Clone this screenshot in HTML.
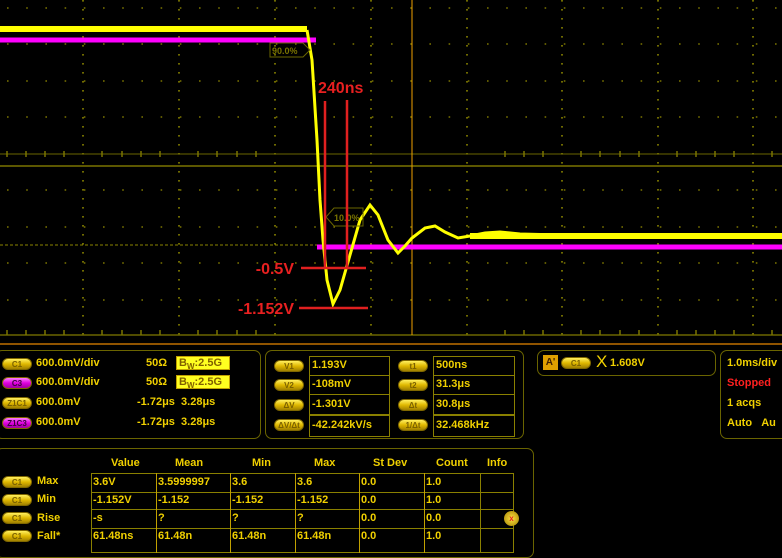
<!DOCTYPE html>
<html><head><meta charset="utf-8"><style>
*{margin:0;padding:0;box-sizing:border-box}
body{width:782px;height:546px;background:#000;position:relative;overflow:hidden;font-family:"Liberation Sans",sans-serif;font-weight:bold;color:#f0d000;font-size:11px}
.a{position:absolute;white-space:nowrap}
.pn{position:absolute;border:1.5px solid #6a6400;border-radius:7px}
.b{position:absolute;width:30px;height:12px;border-radius:6px;background:linear-gradient(#fff060,#e0b800 50%,#a08000);color:#7a6000;font-size:8px;text-align:center;line-height:12px;border:1px solid #806800}
.m{background:linear-gradient(#ff80ff,#e000e0 50%,#a000a0);color:#400040}
.c{position:absolute;border:1px solid #8a8000}
.t{position:absolute;font-size:11px}
</style></head><body>
<svg class="a" style="left:0;top:0" width="782" height="346">
<g stroke="#8a8400" stroke-width="1.6" stroke-dasharray="1.6 7.4" fill="none">
<line x1="83" y1="0" x2="83" y2="335"/><line x1="179" y1="0" x2="179" y2="335"/><line x1="275" y1="0" x2="275" y2="335"/><line x1="371" y1="0" x2="371" y2="335"/><line x1="467" y1="0" x2="467" y2="335"/><line x1="562" y1="0" x2="562" y2="335"/><line x1="658" y1="0" x2="658" y2="335"/><line x1="753" y1="0" x2="753" y2="335"/>
</g>
<g stroke="#7a7400" stroke-width="1.6" stroke-dasharray="1.6 17.6">
<line x1="7" y1="8" x2="782" y2="8"/><line x1="7" y1="44" x2="782" y2="44"/><line x1="7" y1="81" x2="782" y2="81"/><line x1="7" y1="117" x2="782" y2="117"/><line x1="7" y1="190" x2="782" y2="190"/><line x1="7" y1="227" x2="782" y2="227"/><line x1="7" y1="263" x2="782" y2="263"/><line x1="7" y1="300" x2="782" y2="300"/>
</g>
<line x1="0" y1="154" x2="782" y2="154" stroke="#6a6600" stroke-width="1"/>
<line x1="0" y1="166" x2="782" y2="166" stroke="#7a7400" stroke-width="1.5"/>
<line x1="0" y1="335" x2="782" y2="335" stroke="#6a6600" stroke-width="1.5"/>
<g stroke="#7a7400" stroke-width="1.5">
<path d="M7 151v6M26 151v6M45 151v6M64 151v6M102 151v6M122 151v6M141 151v6M160 151v6M198 151v6M217 151v6M237 151v6M256 151v6M505 151v6M524 151v6M543 151v6M581 151v6M600 151v6M620 151v6M639 151v6M677 151v6M696 151v6M715 151v6M734 151v6M772 151v6"/>
<path d="M7 330v5M26 330v5M45 330v5M64 330v5M102 330v5M122 330v5M141 330v5M160 330v5M198 330v5M217 330v5M237 330v5M256 330v5M505 330v5M524 330v5M543 330v5M581 330v5M600 330v5M620 330v5M639 330v5M677 330v5M696 330v5M715 330v5M734 330v5M772 330v5"/>
</g>
<line x1="0" y1="245" x2="782" y2="245" stroke="#8a8400" stroke-width="1" stroke-dasharray="3 2"/>
<line x1="412" y1="0" x2="412" y2="335" stroke="#f0a000" stroke-width="1"/>
<line x1="0" y1="344" x2="782" y2="344" stroke="#c07000" stroke-width="1.5"/>
<path d="M0 40H316" stroke="#ff00ff" stroke-width="5"/>
<path d="M317 247H782" stroke="#ff00ff" stroke-width="5"/>
<path d="M0 29H307" stroke="#ffff00" stroke-width="6"/>
<path d="M307 30L312 60L317 140L320 200L323 240L327 280L333 304L340 290L350 255L360 220L370 205L378 215L388 240L398 253L405 246L412 238L425 228L435 226L445 232L458 238L470 236L485 233L500 232L520 234L560 235L782 236" stroke="#ffff00" stroke-width="3" fill="none"/>
<path d="M470 236L782 236" stroke="#ffff00" stroke-width="6"/>
<path d="M270 43H303L310 50L303 57H270Z" fill="none" stroke="#6a6600"/>
<text x="272" y="54" font-size="9" fill="#7a7400" font-family="Liberation Sans">90.0%</text>
<path d="M334 208H363V226H334L326 217Z" fill="none" stroke="#6a6600"/>
<text x="334" y="221" font-size="9" fill="#7a7400" font-family="Liberation Sans">10.0%</text>
<g stroke="#e02020" stroke-width="2.5">
<line x1="325" y1="101" x2="325" y2="268"/><line x1="347" y1="100" x2="347" y2="268"/>
<line x1="301" y1="268" x2="366" y2="268"/><line x1="299" y1="308" x2="368" y2="308"/>
</g>
<g fill="#e82020" style="font-family:'Liberation Sans';font-weight:bold;font-size:16px">
<text x="318" y="93">240ns</text>
<text x="294" y="274" text-anchor="end">-0.5V</text>
<text x="294" y="314" text-anchor="end">-1.152V</text>
</g>
</svg>

<div class="pn" style="left:-5px;top:350px;width:266px;height:89px"></div>
<div class="b" style="left:2px;top:358px">C1</div><div class="t" style="left:36px;top:357px">600.0mV/div</div><div class="t" style="left:146px;top:357px">50Ω</div><div class="a" style="left:176px;top:356px;width:54px;height:14px;background:#ffff20;border:1px solid #c0a000;color:#806000;font-size:11px;line-height:13px;padding-left:2px">B<sub style="font-size:8px">W</sub>:2.5G</div>
<div class="b m" style="left:2px;top:377px">C3</div><div class="t" style="left:36px;top:376px">600.0mV/div</div><div class="t" style="left:146px;top:376px">50Ω</div><div class="a" style="left:176px;top:375px;width:54px;height:14px;background:#ffff20;border:1px solid #c0a000;color:#806000;font-size:11px;line-height:13px;padding-left:2px">B<sub style="font-size:8px">W</sub>:2.5G</div>
<div class="b" style="left:2px;top:397px">Z1C1</div><div class="t" style="left:36px;top:396px">600.0mV</div><div class="t" style="left:137px;top:396px">-1.72μs&nbsp;&nbsp;3.28μs</div>
<div class="b m" style="left:2px;top:417px">Z1C3</div><div class="t" style="left:36px;top:416px">600.0mV</div><div class="t" style="left:137px;top:416px">-1.72μs&nbsp;&nbsp;3.28μs</div>

<div class="pn" style="left:265px;top:350px;width:259px;height:89px"></div>
<div class="c" style="left:309px;top:356px;width:81px;height:81px"></div>
<div class="c" style="left:309px;top:375px;width:81px;height:20px"></div>
<div class="c" style="left:309px;top:414px;width:81px;height:1px"></div>
<div class="c" style="left:433px;top:356px;width:82px;height:81px"></div>
<div class="c" style="left:433px;top:375px;width:82px;height:20px"></div>
<div class="c" style="left:433px;top:414px;width:82px;height:1px"></div>
<div class="b" style="left:274px;top:360px">V1</div><div class="t" style="left:312px;top:359px">1.193V</div>
<div class="b" style="left:274px;top:379px">V2</div><div class="t" style="left:312px;top:378px">-108mV</div>
<div class="b" style="left:274px;top:399px">ΔV</div><div class="t" style="left:312px;top:398px">-1.301V</div>
<div class="b" style="left:274px;top:419px">ΔV/Δt</div><div class="t" style="left:312px;top:419px">-42.242kV/s</div>
<div class="b" style="left:398px;top:360px">t1</div><div class="t" style="left:436px;top:359px">500ns</div>
<div class="b" style="left:398px;top:379px">t2</div><div class="t" style="left:436px;top:378px">31.3μs</div>
<div class="b" style="left:398px;top:399px">Δt</div><div class="t" style="left:436px;top:398px">30.8μs</div>
<div class="b" style="left:398px;top:419px">1/Δt</div><div class="t" style="left:436px;top:419px">32.468kHz</div>

<div class="pn" style="left:537px;top:350px;width:179px;height:26px"></div>
<div class="a" style="left:543px;top:355px;width:15px;height:15px;background:#e0a000;color:#402000;font-size:10px;line-height:15px;text-align:center">A'</div>
<div class="b" style="left:561px;top:357px">C1</div>
<div class="t" style="left:596px;top:352px;font-size:17px;font-weight:normal">X</div><div class="t" style="left:610px;top:357px">1.608V</div>

<div class="pn" style="left:720px;top:350px;width:80px;height:89px"></div>
<div class="t" style="left:727px;top:357px">1.0ms/div</div>
<div class="t" style="left:727px;top:377px;color:#ff2020">Stopped</div>
<div class="t" style="left:727px;top:397px">1 acqs</div>
<div class="t" style="left:727px;top:417px">Auto&nbsp;&nbsp;&nbsp;Au</div>

<div class="pn" style="left:-5px;top:448px;width:539px;height:110px"></div>
<div class="t" style="left:111px;top:457px">Value</div><div class="t" style="left:175px;top:457px">Mean</div><div class="t" style="left:252px;top:457px">Min</div><div class="t" style="left:314px;top:457px">Max</div><div class="t" style="left:373px;top:457px">St Dev</div><div class="t" style="left:436px;top:457px">Count</div><div class="t" style="left:487px;top:457px">Info</div>
<div class="a" style="left:91px;top:473px;width:423px;height:80px;border:1px solid #8a8000"></div>
<div class="a" style="left:91px;top:492px;width:423px;height:18px;border-top:1px solid #8a8000;border-bottom:1px solid #8a8000"></div>
<div class="a" style="left:91px;top:528px;width:423px;height:1px;background:#8a8000"></div>
<div class="a" style="left:156px;top:473px;width:1px;height:80px;background:#c0a000"></div>
<div class="a" style="left:230px;top:473px;width:1px;height:80px;background:#c0a000"></div>
<div class="a" style="left:295px;top:473px;width:1px;height:80px;background:#c0a000"></div>
<div class="a" style="left:359px;top:473px;width:1px;height:80px;background:#c0a000"></div>
<div class="a" style="left:424px;top:473px;width:1px;height:80px;background:#c0a000"></div>
<div class="a" style="left:480px;top:473px;width:1px;height:80px;background:#8a8000"></div>
<div class="b" style="left:2px;top:476px">C1</div><div class="t" style="left:37px;top:475px">Max</div>
<div class="b" style="left:2px;top:494px">C1</div><div class="t" style="left:37px;top:493px">Min</div>
<div class="b" style="left:2px;top:512px">C1</div><div class="t" style="left:37px;top:512px">Rise</div>
<div class="b" style="left:2px;top:530px">C1</div><div class="t" style="left:37px;top:530px">Fall*</div>
<div class="t" style="left:93px;top:476px">3.6V</div><div class="t" style="left:158px;top:476px">3.5999997</div><div class="t" style="left:232px;top:476px">3.6</div><div class="t" style="left:297px;top:476px">3.6</div><div class="t" style="left:361px;top:476px">0.0</div><div class="t" style="left:426px;top:476px">1.0</div>
<div class="t" style="left:93px;top:494px">-1.152V</div><div class="t" style="left:158px;top:494px">-1.152</div><div class="t" style="left:232px;top:494px">-1.152</div><div class="t" style="left:297px;top:494px">-1.152</div><div class="t" style="left:361px;top:494px">0.0</div><div class="t" style="left:426px;top:494px">1.0</div>
<div class="t" style="left:93px;top:512px">-s</div><div class="t" style="left:158px;top:512px">?</div><div class="t" style="left:232px;top:512px">?</div><div class="t" style="left:297px;top:512px">?</div><div class="t" style="left:361px;top:512px">0.0</div><div class="t" style="left:426px;top:512px">0.0</div>
<div class="a" style="left:504px;top:511px;width:15px;height:15px;border-radius:50%;background:radial-gradient(#ffe040,#a08000);color:#e02020;font-size:8px;text-align:center;line-height:15px">x</div>
<div class="t" style="left:93px;top:530px">61.48ns</div><div class="t" style="left:158px;top:530px">61.48n</div><div class="t" style="left:232px;top:530px">61.48n</div><div class="t" style="left:297px;top:530px">61.48n</div><div class="t" style="left:361px;top:530px">0.0</div><div class="t" style="left:426px;top:530px">1.0</div>
</body></html>
